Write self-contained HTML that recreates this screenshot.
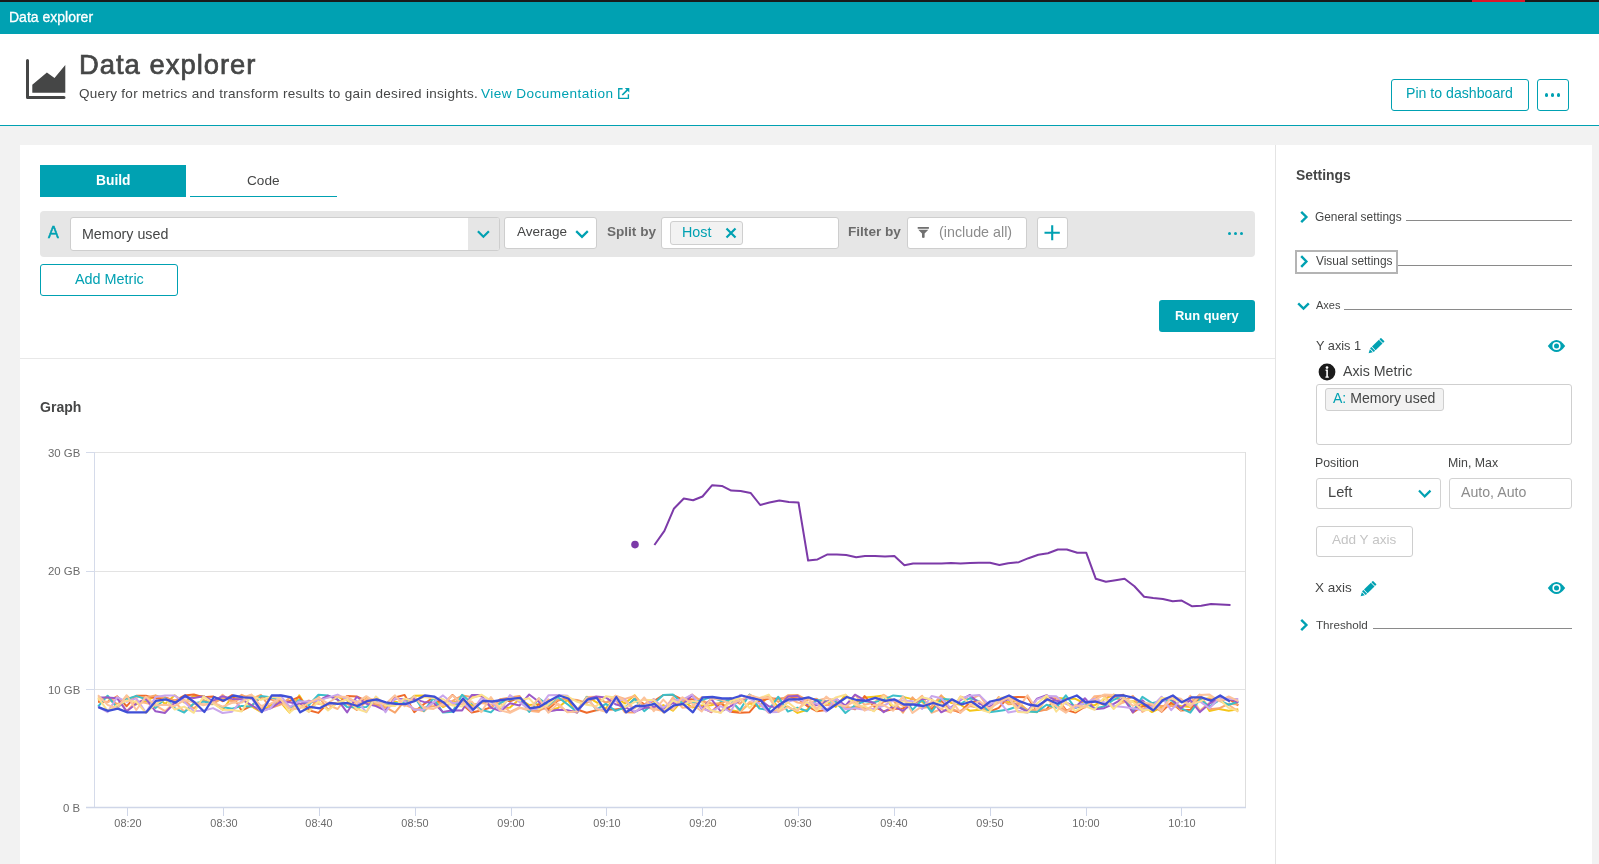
<!DOCTYPE html>
<html><head><meta charset="utf-8"><title>Data explorer</title>
<style>
html,body{margin:0;padding:0;}
body{width:1599px;height:864px;overflow:hidden;position:relative;background:#f2f2f2;font-family:"Liberation Sans",sans-serif;}
.t{position:absolute;white-space:nowrap;will-change:transform;}
.b{position:absolute;}
</style></head><body>
<div class="b" style="left:0px;top:0px;width:1599px;height:2px;background:#1a1a1a"></div>
<div class="b" style="left:1472px;top:0px;width:53px;height:2px;background:#dc172a"></div>
<div class="b" style="left:0px;top:2px;width:1599px;height:32px;background:#00a1b2"></div>
<div class="t" style="left:9.48px;top:8.55px;font-size:14.0px;line-height:17px;color:#fff;font-weight:400;-webkit-text-stroke:0.3px #fff">Data explorer</div>
<div class="b" style="left:0px;top:34px;width:1599px;height:91px;background:#fff"></div>
<div class="b" style="left:0px;top:125px;width:1599px;height:1px;background:#00a1b2"></div>
<svg class="b" style="left:0;top:0" width="120" height="120" viewBox="0 0 120 120"><path d="M26 60.5 Q26 59 27.5 59 Q29 59 29 60.5 L29 96 L64 96 Q65.5 96 65.5 97.5 Q65.5 99 64 99 L27.5 99 Q26 99 26 97.5 Z" fill="#454646"/><path d="M32.3 84.8 L46.9 72.4 L54.5 78 L65.3 64.9 L65.3 92.7 L32.3 92.7 Z" fill="#454646"/></svg>
<div class="t" style="left:78.71px;top:47.76px;font-size:27.4px;line-height:33px;color:#454646;font-weight:400;letter-spacing:1.0px;-webkit-text-stroke:0.7px #454646">Data explorer</div>
<div class="t" style="left:79.46px;top:86.07px;font-size:13.5px;line-height:16px;color:#454646;font-weight:400;letter-spacing:0.3px">Query for metrics and transform results to gain desired insights.</div>
<div class="t" style="left:481.25px;top:86.04px;font-size:13.6px;line-height:16px;color:#00a1b2;font-weight:400;letter-spacing:0.45px">View Documentation</div>
<svg class="b" style="left:617px;top:87px" width="14" height="14" viewBox="0 0 14 14"><path d="M5.6 1.75 H1.75 V11.4 H11.4 V7.3" fill="none" stroke="#00a1b2" stroke-width="1.35"/><path d="M7.8 1.1 H12.3 V5.6 Z" fill="#00a1b2"/><path d="M11.2 2.2 L5.3 8" stroke="#00a1b2" stroke-width="1.7"/></svg>
<div class="b" style="left:1391px;top:79px;width:138px;height:32px;border:1px solid #00a1b2;border-radius:3px;box-sizing:border-box;background:#fff"></div>
<div class="t" style="left:1406.12px;top:85.35px;font-size:14.14px;line-height:17px;color:#00a1b2;font-weight:400;">Pin to dashboard</div>
<div class="b" style="left:1537px;top:79px;width:32px;height:32px;border:1px solid #00a1b2;border-radius:3px;box-sizing:border-box;background:#fff"></div>
<div class="b" style="left:1544.9px;top:93.4px;width:3.2px;height:3.2px;border-radius:50%;background:#00a1b2"></div>
<div class="b" style="left:1550.9px;top:93.4px;width:3.2px;height:3.2px;border-radius:50%;background:#00a1b2"></div>
<div class="b" style="left:1556.9px;top:93.4px;width:3.2px;height:3.2px;border-radius:50%;background:#00a1b2"></div>
<div class="b" style="left:20px;top:145px;width:1572px;height:719px;background:#fff"></div>
<div class="b" style="left:1275px;top:145px;width:1px;height:719px;background:#e4e4e4"></div>
<div class="b" style="left:20px;top:358px;width:1255px;height:1px;background:#e8e8e8"></div>
<div class="b" style="left:40px;top:165px;width:146px;height:32px;background:#00a1b2"></div>
<div class="t" style="left:95.77px;top:172.12px;font-size:13.8px;line-height:17px;color:#fff;font-weight:700;">Build</div>
<div class="b" style="left:190px;top:196px;width:146.6px;height:1.4px;background:#00a1b2"></div>
<div class="t" style="left:246.92px;top:172.69px;font-size:13.6px;line-height:16px;color:#454646;font-weight:400;">Code</div>
<div class="b" style="left:40px;top:211px;width:1215px;height:46px;background:#e6e6e6;border-radius:4px"></div>
<div class="t" style="left:48.20px;top:222.89px;font-size:16.2px;line-height:19px;color:#00a1b2;font-weight:400;-webkit-text-stroke:0.5px #00a1b2">A</div>
<div class="b" style="left:70px;top:217px;width:430px;height:34px;background:#fff;border:1px solid #cecece;border-radius:3px;box-sizing:border-box"></div>
<div class="b" style="left:468px;top:218px;width:31px;height:32px;background:#e6e6e6;box-sizing:border-box;border-radius:0 2px 2px 0"></div>
<svg class="b" style="left:0;top:0;overflow:visible" width="1" height="1"><path d="M477.9 231.2 L483.4 236.8 L488.9 231.2" fill="none" stroke="#00a1b2" stroke-width="2.2"/></svg>
<div class="t" style="left:82.46px;top:225.56px;font-size:14.26px;line-height:17px;color:#454646;font-weight:400;">Memory used</div>
<div class="b" style="left:504px;top:217px;width:93px;height:32px;background:#fff;border:1px solid #cecece;border-radius:3px;box-sizing:border-box"></div>
<div class="t" style="left:517.30px;top:224.32px;font-size:13.5px;line-height:16px;color:#454646;font-weight:400;">Average</div>
<svg class="b" style="left:0;top:0;overflow:visible" width="1" height="1"><path d="M576.2 231.1 L582.0 236.9 L587.8 231.1" fill="none" stroke="#00a1b2" stroke-width="2.2"/></svg>
<div class="t" style="left:606.73px;top:224.30px;font-size:13.57px;line-height:16px;color:#6b6b6b;font-weight:700;">Split by</div>
<div class="b" style="left:661px;top:217px;width:178px;height:32px;background:#fff;border:1px solid #cecece;border-radius:3px;box-sizing:border-box"></div>
<div class="b" style="left:670px;top:221px;width:73px;height:24px;background:#f2f2f2;border:1px solid #cfcfcf;border-radius:3px;box-sizing:border-box"></div>
<div class="t" style="left:682.36px;top:223.55px;font-size:14.3px;line-height:17px;color:#00a1b2;font-weight:400;">Host</div>
<svg class="b" style="left:725px;top:227px" width="12" height="12" viewBox="0 0 12 12"><path d="M1.5 1.5 L10.5 10.5 M10.5 1.5 L1.5 10.5" stroke="#00a1b2" stroke-width="2.2"/></svg>
<div class="t" style="left:847.88px;top:224.29px;font-size:13.6px;line-height:16px;color:#6b6b6b;font-weight:700;">Filter by</div>
<div class="b" style="left:907px;top:217px;width:120px;height:32px;background:#fff;border:1px solid #cecece;border-radius:3px;box-sizing:border-box"></div>
<svg class="b" style="left:910px;top:220px" width="30" height="25" viewBox="0 0 30 25"><path d="M7.7 7 H18.9 V8.8 H7.7 Z" fill="#717171"/><path d="M8.3 9.7 H18.3 L14.6 13.4 V17.4 L13.3 18.1 L12 17.4 V13.4 Z" fill="#717171"/></svg>
<div class="t" style="left:938.54px;top:223.55px;font-size:14.3px;line-height:17px;color:#8c8c8c;font-weight:400;">(include all)</div>
<div class="b" style="left:1037px;top:217px;width:31px;height:32px;background:#fff;border:1px solid #cecece;border-radius:3px;box-sizing:border-box"></div>
<svg class="b" style="left:1043px;top:224px" width="18" height="18" viewBox="0 0 18 18"><path d="M9.2 1.3 V16.3 M1.5 8.7 H16.8" stroke="#00a1b2" stroke-width="2.1"/></svg>
<div class="b" style="left:1228.0px;top:231.5px;width:3px;height:3px;border-radius:50%;background:#00a1b2"></div>
<div class="b" style="left:1234.0px;top:231.5px;width:3px;height:3px;border-radius:50%;background:#00a1b2"></div>
<div class="b" style="left:1240.0px;top:231.5px;width:3px;height:3px;border-radius:50%;background:#00a1b2"></div>
<div class="b" style="left:40px;top:264px;width:138px;height:32px;border:1px solid #00a1b2;border-radius:3px;box-sizing:border-box;background:#fff"></div>
<div class="t" style="left:74.70px;top:270.51px;font-size:14.4px;line-height:17px;color:#00a1b2;font-weight:400;">Add Metric</div>
<div class="b" style="left:1159px;top:300px;width:96px;height:32px;background:#00a1b2;border-radius:3px"></div>
<div class="t" style="left:1174.93px;top:308.43px;font-size:12.9px;line-height:15px;color:#fff;font-weight:700;">Run query</div>
<div class="t" style="left:39.74px;top:398.83px;font-size:14.06px;line-height:17px;color:#454646;font-weight:700;">Graph</div>
<svg class="b" style="left:0;top:0" width="1599" height="864" viewBox="0 0 1599 864"><path d="M86 689.5 H1245.5" stroke="#e3e3e3" stroke-width="1"/><path d="M86 689.5 H94" stroke="#d5dbea" stroke-width="1"/><path d="M86 571.5 H1245.5" stroke="#e3e3e3" stroke-width="1"/><path d="M86 571.5 H94" stroke="#d5dbea" stroke-width="1"/><path d="M86 452.5 H1245.5" stroke="#e3e3e3" stroke-width="1"/><path d="M86 452.5 H94" stroke="#d5dbea" stroke-width="1"/><path d="M94.5 452 V807.5" stroke="#d5dbea" stroke-width="1"/><path d="M1245.5 452 V807.5" stroke="#dedede" stroke-width="1"/><path d="M86 807.5 H1246" stroke="#cfd6e8" stroke-width="1.5"/><path d="M127.5 808 V816" stroke="#cfd6e8" stroke-width="1"/><path d="M223.5 808 V816" stroke="#cfd6e8" stroke-width="1"/><path d="M319.5 808 V816" stroke="#cfd6e8" stroke-width="1"/><path d="M415.5 808 V816" stroke="#cfd6e8" stroke-width="1"/><path d="M511.5 808 V816" stroke="#cfd6e8" stroke-width="1"/><path d="M606.5 808 V816" stroke="#cfd6e8" stroke-width="1"/><path d="M702.5 808 V816" stroke="#cfd6e8" stroke-width="1"/><path d="M798.5 808 V816" stroke="#cfd6e8" stroke-width="1"/><path d="M894.5 808 V816" stroke="#cfd6e8" stroke-width="1"/><path d="M990.5 808 V816" stroke="#cfd6e8" stroke-width="1"/><path d="M1086.5 808 V816" stroke="#cfd6e8" stroke-width="1"/><path d="M1181.5 808 V816" stroke="#cfd6e8" stroke-width="1"/></svg>
<svg class="b" style="left:0;top:0" width="1599" height="864"><path d="M98.0 700.5 L107.6 697.3 L117.2 706.5 L126.7 695.8 L136.3 704.4 L145.9 701.3 L155.5 695.6 L165.1 703.9 L174.7 695.2 L184.2 702.5 L193.8 695.8 L203.4 696.2 L213.0 702.4 L222.6 709.8 L232.1 696.8 L241.7 698.6 L251.3 706.1 L260.9 712.0 L270.5 705.2 L280.1 701.8 L289.6 712.6 L299.2 695.4 L308.8 710.4 L318.4 699.9 L328.0 697.2 L337.6 696.7 L347.1 700.2 L356.7 709.6 L366.3 697.8 L375.9 705.3 L385.5 706.3 L395.0 701.4 L404.6 704.6 L414.2 695.7 L423.8 695.6 L433.4 698.3 L443.0 707.1 L452.5 702.4 L462.1 700.3 L471.7 705.3 L481.3 702.9 L490.9 700.0 L500.4 709.2 L510.0 707.4 L519.6 699.0 L529.2 705.1 L538.8 704.2 L548.4 710.7 L557.9 708.0 L567.5 699.8 L577.1 712.6 L586.7 696.7 L596.3 702.2 L605.8 708.5 L615.4 697.3 L625.0 703.5 L634.6 695.2 L644.2 706.9 L653.8 708.6 L663.3 705.1 L672.9 710.7 L682.5 700.3 L692.1 707.4 L701.7 705.5 L711.2 705.2 L720.8 702.9 L730.4 710.0 L740.0 712.0 L749.6 703.3 L759.2 706.8 L768.7 695.6 L778.3 707.5 L787.9 706.5 L797.5 712.9 L807.1 709.7 L816.7 699.8 L826.2 701.6 L835.8 706.9 L845.4 694.9 L855.0 703.0 L864.6 697.6 L874.1 696.7 L883.7 695.6 L893.3 708.7 L902.9 696.9 L912.5 699.1 L922.1 701.7 L931.6 710.6 L941.2 696.0 L950.8 702.8 L960.4 704.7 L970.0 710.8 L979.5 709.7 L989.1 710.5 L998.7 699.7 L1008.3 702.2 L1017.9 701.1 L1027.5 710.9 L1037.0 712.2 L1046.6 697.3 L1056.2 697.8 L1065.8 698.8 L1075.4 698.8 L1084.9 703.5 L1094.5 705.4 L1104.1 699.4 L1113.7 694.6 L1123.3 702.3 L1132.9 701.3 L1142.4 705.0 L1152.0 712.1 L1161.6 707.3 L1171.2 704.0 L1180.8 705.9 L1190.3 707.0 L1199.9 695.5 L1209.5 711.1 L1219.1 708.9 L1228.7 710.7 L1238.3 709.3" fill="none" stroke="#f5c518" stroke-width="2.0" stroke-linejoin="round"/></svg>
<svg class="b" style="left:0;top:0" width="1599" height="864"><path d="M98.0 701.8 L107.6 701.9 L117.2 696.4 L126.7 706.2 L136.3 695.7 L145.9 695.7 L155.5 698.4 L165.1 697.5 L174.7 700.8 L184.2 695.5 L193.8 694.5 L203.4 697.3 L213.0 696.4 L222.6 701.2 L232.1 695.0 L241.7 710.7 L251.3 705.9 L260.9 697.2 L270.5 699.2 L280.1 700.9 L289.6 701.2 L299.2 696.8 L308.8 710.2 L318.4 712.9 L328.0 703.1 L337.6 703.5 L347.1 696.1 L356.7 696.4 L366.3 700.8 L375.9 699.4 L385.5 709.8 L395.0 697.5 L404.6 694.9 L414.2 712.1 L423.8 704.3 L433.4 697.2 L443.0 704.5 L452.5 695.0 L462.1 704.3 L471.7 712.6 L481.3 710.5 L490.9 707.4 L500.4 699.3 L510.0 701.3 L519.6 697.6 L529.2 708.8 L538.8 704.4 L548.4 708.9 L557.9 700.6 L567.5 698.6 L577.1 709.5 L586.7 712.7 L596.3 710.3 L605.8 709.4 L615.4 709.6 L625.0 708.2 L634.6 698.7 L644.2 704.1 L653.8 701.1 L663.3 695.0 L672.9 695.0 L682.5 699.7 L692.1 699.3 L701.7 707.3 L711.2 712.2 L720.8 702.8 L730.4 711.8 L740.0 712.8 L749.6 712.2 L759.2 701.2 L768.7 698.6 L778.3 698.7 L787.9 698.1 L797.5 698.3 L807.1 706.0 L816.7 711.2 L826.2 710.0 L835.8 703.4 L845.4 706.6 L855.0 709.3 L864.6 696.1 L874.1 706.7 L883.7 711.3 L893.3 709.0 L902.9 708.4 L912.5 703.3 L922.1 697.8 L931.6 709.1 L941.2 700.7 L950.8 709.3 L960.4 712.5 L970.0 701.8 L979.5 701.9 L989.1 712.0 L998.7 707.9 L1008.3 697.6 L1017.9 696.9 L1027.5 697.3 L1037.0 711.2 L1046.6 709.4 L1056.2 697.2 L1065.8 709.8 L1075.4 712.6 L1084.9 706.7 L1094.5 701.0 L1104.1 704.7 L1113.7 696.9 L1123.3 694.8 L1132.9 712.5 L1142.4 706.5 L1152.0 704.2 L1161.6 711.8 L1171.2 702.5 L1180.8 710.6 L1190.3 709.8 L1199.9 698.4 L1209.5 699.2 L1219.1 699.9 L1228.7 698.9 L1238.3 705.3" fill="none" stroke="#ef6a2a" stroke-width="2.0" stroke-linejoin="round"/></svg>
<svg class="b" style="left:0;top:0" width="1599" height="864"><path d="M98.0 699.3 L107.6 702.3 L117.2 696.9 L126.7 711.3 L136.3 701.0 L145.9 703.0 L155.5 705.3 L165.1 711.2 L174.7 702.3 L184.2 711.5 L193.8 703.8 L203.4 704.3 L213.0 704.2 L222.6 694.8 L232.1 702.6 L241.7 697.9 L251.3 694.6 L260.9 709.3 L270.5 697.7 L280.1 703.3 L289.6 707.9 L299.2 704.8 L308.8 700.5 L318.4 704.1 L328.0 704.8 L337.6 709.0 L347.1 696.5 L356.7 704.9 L366.3 699.1 L375.9 699.6 L385.5 708.8 L395.0 703.9 L404.6 704.9 L414.2 708.6 L423.8 711.4 L433.4 702.7 L443.0 705.8 L452.5 703.9 L462.1 704.0 L471.7 707.3 L481.3 702.9 L490.9 704.4 L500.4 703.3 L510.0 711.9 L519.6 707.4 L529.2 710.7 L538.8 711.9 L548.4 699.3 L557.9 704.9 L567.5 712.0 L577.1 710.0 L586.7 697.0 L596.3 696.8 L605.8 702.7 L615.4 695.8 L625.0 699.0 L634.6 695.9 L644.2 706.9 L653.8 709.0 L663.3 711.1 L672.9 697.4 L682.5 707.7 L692.1 706.7 L701.7 697.1 L711.2 710.8 L720.8 712.4 L730.4 698.6 L740.0 712.1 L749.6 701.9 L759.2 703.5 L768.7 712.8 L778.3 709.9 L787.9 697.5 L797.5 702.5 L807.1 704.0 L816.7 700.8 L826.2 698.1 L835.8 700.4 L845.4 707.9 L855.0 694.9 L864.6 704.7 L874.1 702.6 L883.7 694.8 L893.3 700.6 L902.9 706.0 L912.5 704.0 L922.1 695.7 L931.6 712.7 L941.2 709.1 L950.8 712.5 L960.4 696.4 L970.0 699.4 L979.5 695.2 L989.1 708.9 L998.7 699.5 L1008.3 696.9 L1017.9 702.3 L1027.5 711.4 L1037.0 709.7 L1046.6 699.3 L1056.2 697.3 L1065.8 711.5 L1075.4 705.1 L1084.9 707.5 L1094.5 696.2 L1104.1 695.6 L1113.7 707.2 L1123.3 702.4 L1132.9 695.8 L1142.4 711.9 L1152.0 706.2 L1161.6 709.3 L1171.2 696.0 L1180.8 710.3 L1190.3 695.7 L1199.9 710.5 L1209.5 702.9 L1219.1 700.8 L1228.7 704.7 L1238.3 711.6" fill="none" stroke="#ffb787" stroke-width="2.0" stroke-linejoin="round"/></svg>
<svg class="b" style="left:0;top:0" width="1599" height="864"><path d="M98.0 699.5 L107.6 696.9 L117.2 704.2 L126.7 698.9 L136.3 696.5 L145.9 697.5 L155.5 695.4 L165.1 698.2 L174.7 700.3 L184.2 700.1 L193.8 708.6 L203.4 699.9 L213.0 703.8 L222.6 697.8 L232.1 700.9 L241.7 694.8 L251.3 699.1 L260.9 694.8 L270.5 708.1 L280.1 704.7 L289.6 698.0 L299.2 703.3 L308.8 711.8 L318.4 696.5 L328.0 709.7 L337.6 702.5 L347.1 703.7 L356.7 709.9 L366.3 701.8 L375.9 703.9 L385.5 707.2 L395.0 712.7 L404.6 700.8 L414.2 709.9 L423.8 707.6 L433.4 706.3 L443.0 702.0 L452.5 700.9 L462.1 695.5 L471.7 696.9 L481.3 695.8 L490.9 708.2 L500.4 699.2 L510.0 697.5 L519.6 696.1 L529.2 710.1 L538.8 710.6 L548.4 706.9 L557.9 699.7 L567.5 699.0 L577.1 699.9 L586.7 703.0 L596.3 697.4 L605.8 702.7 L615.4 699.4 L625.0 712.3 L634.6 712.5 L644.2 704.6 L653.8 699.0 L663.3 712.4 L672.9 700.2 L682.5 701.1 L692.1 694.5 L701.7 701.6 L711.2 703.3 L720.8 703.8 L730.4 698.2 L740.0 703.8 L749.6 694.6 L759.2 699.4 L768.7 696.2 L778.3 701.9 L787.9 695.3 L797.5 694.9 L807.1 700.1 L816.7 698.8 L826.2 705.3 L835.8 704.3 L845.4 708.4 L855.0 706.7 L864.6 707.7 L874.1 710.8 L883.7 701.7 L893.3 700.5 L902.9 712.7 L912.5 697.3 L922.1 707.9 L931.6 706.4 L941.2 695.3 L950.8 710.0 L960.4 711.0 L970.0 706.1 L979.5 708.1 L989.1 709.5 L998.7 697.1 L1008.3 704.2 L1017.9 703.8 L1027.5 709.9 L1037.0 709.4 L1046.6 709.8 L1056.2 705.3 L1065.8 711.0 L1075.4 707.1 L1084.9 707.3 L1094.5 698.8 L1104.1 695.1 L1113.7 697.0 L1123.3 701.2 L1132.9 696.4 L1142.4 710.0 L1152.0 704.8 L1161.6 706.1 L1171.2 706.1 L1180.8 707.1 L1190.3 703.6 L1199.9 694.6 L1209.5 709.3 L1219.1 708.3 L1228.7 703.8 L1238.3 704.4" fill="none" stroke="#f8a56b" stroke-width="2.0" stroke-linejoin="round"/></svg>
<svg class="b" style="left:0;top:0" width="1599" height="864"><path d="M98.0 706.7 L107.6 695.7 L117.2 708.1 L126.7 699.2 L136.3 695.9 L145.9 699.4 L155.5 708.0 L165.1 698.3 L174.7 708.2 L184.2 712.6 L193.8 703.6 L203.4 701.6 L213.0 703.4 L222.6 707.1 L232.1 708.7 L241.7 705.9 L251.3 706.4 L260.9 695.9 L270.5 697.2 L280.1 699.2 L289.6 708.2 L299.2 700.1 L308.8 705.0 L318.4 694.7 L328.0 695.6 L337.6 699.5 L347.1 706.9 L356.7 707.3 L366.3 707.0 L375.9 699.9 L385.5 704.1 L395.0 703.1 L404.6 703.1 L414.2 696.7 L423.8 711.0 L433.4 698.2 L443.0 712.6 L452.5 711.8 L462.1 694.8 L471.7 703.0 L481.3 709.7 L490.9 712.4 L500.4 702.8 L510.0 699.5 L519.6 698.4 L529.2 712.0 L538.8 698.4 L548.4 705.3 L557.9 697.1 L567.5 704.2 L577.1 712.1 L586.7 697.0 L596.3 709.7 L605.8 703.9 L615.4 710.9 L625.0 707.5 L634.6 698.8 L644.2 711.1 L653.8 703.5 L663.3 695.0 L672.9 694.6 L682.5 703.6 L692.1 702.8 L701.7 700.1 L711.2 697.1 L720.8 700.9 L730.4 700.3 L740.0 710.0 L749.6 694.5 L759.2 708.4 L768.7 710.0 L778.3 696.7 L787.9 711.6 L797.5 707.7 L807.1 711.2 L816.7 699.9 L826.2 701.4 L835.8 701.8 L845.4 713.0 L855.0 705.4 L864.6 701.2 L874.1 702.4 L883.7 699.6 L893.3 695.4 L902.9 696.4 L912.5 709.9 L922.1 699.8 L931.6 711.8 L941.2 699.1 L950.8 699.4 L960.4 704.0 L970.0 698.0 L979.5 701.4 L989.1 712.2 L998.7 710.9 L1008.3 709.5 L1017.9 706.2 L1027.5 711.4 L1037.0 711.9 L1046.6 704.7 L1056.2 707.8 L1065.8 695.4 L1075.4 708.0 L1084.9 702.8 L1094.5 708.4 L1104.1 706.4 L1113.7 699.8 L1123.3 695.4 L1132.9 711.6 L1142.4 696.9 L1152.0 703.2 L1161.6 700.9 L1171.2 700.0 L1180.8 708.2 L1190.3 712.6 L1199.9 699.3 L1209.5 706.6 L1219.1 700.1 L1228.7 704.8 L1238.3 701.8" fill="none" stroke="#3cbfc9" stroke-width="2.0" stroke-linejoin="round"/></svg>
<svg class="b" style="left:0;top:0" width="1599" height="864"><path d="M98.0 697.6 L107.6 697.5 L117.2 698.3 L126.7 711.3 L136.3 703.7 L145.9 698.6 L155.5 711.3 L165.1 712.9 L174.7 702.8 L184.2 697.1 L193.8 698.1 L203.4 696.2 L213.0 700.8 L222.6 696.2 L232.1 698.9 L241.7 699.3 L251.3 705.0 L260.9 710.9 L270.5 708.4 L280.1 702.1 L289.6 702.2 L299.2 704.2 L308.8 701.5 L318.4 700.8 L328.0 695.6 L337.6 699.6 L347.1 712.4 L356.7 696.8 L366.3 703.8 L375.9 706.1 L385.5 710.5 L395.0 698.5 L404.6 699.5 L414.2 699.1 L423.8 701.9 L433.4 702.7 L443.0 712.1 L452.5 710.2 L462.1 710.6 L471.7 694.9 L481.3 695.1 L490.9 707.6 L500.4 711.1 L510.0 703.3 L519.6 705.4 L529.2 694.5 L538.8 701.7 L548.4 711.6 L557.9 709.8 L567.5 710.3 L577.1 712.5 L586.7 699.1 L596.3 696.5 L605.8 697.4 L615.4 704.2 L625.0 707.1 L634.6 711.9 L644.2 707.9 L653.8 706.5 L663.3 708.6 L672.9 703.0 L682.5 704.7 L692.1 695.2 L701.7 709.0 L711.2 698.8 L720.8 711.5 L730.4 706.4 L740.0 700.1 L749.6 696.9 L759.2 699.2 L768.7 706.3 L778.3 707.4 L787.9 696.6 L797.5 695.8 L807.1 704.2 L816.7 705.3 L826.2 701.7 L835.8 698.6 L845.4 705.6 L855.0 694.7 L864.6 700.1 L874.1 703.0 L883.7 712.2 L893.3 706.4 L902.9 710.8 L912.5 703.3 L922.1 698.8 L931.6 699.1 L941.2 712.3 L950.8 707.5 L960.4 700.2 L970.0 694.9 L979.5 703.7 L989.1 707.0 L998.7 702.3 L1008.3 699.3 L1017.9 706.8 L1027.5 711.6 L1037.0 698.7 L1046.6 695.1 L1056.2 700.8 L1065.8 702.3 L1075.4 707.1 L1084.9 698.2 L1094.5 709.2 L1104.1 708.2 L1113.7 703.8 L1123.3 698.3 L1132.9 712.4 L1142.4 700.3 L1152.0 709.7 L1161.6 698.8 L1171.2 698.6 L1180.8 708.6 L1190.3 700.0 L1199.9 712.1 L1209.5 703.7 L1219.1 698.0 L1228.7 698.6 L1238.3 702.2" fill="none" stroke="#9b59c8" stroke-width="2.0" stroke-linejoin="round"/></svg>
<svg class="b" style="left:0;top:0" width="1599" height="864"><path d="M98.0 706.8 L107.6 712.1 L117.2 697.2 L126.7 701.8 L136.3 698.4 L145.9 712.5 L155.5 697.1 L165.1 695.5 L174.7 695.6 L184.2 701.8 L193.8 711.1 L203.4 710.8 L213.0 708.1 L222.6 713.0 L232.1 711.7 L241.7 700.6 L251.3 697.9 L260.9 711.8 L270.5 708.3 L280.1 695.1 L289.6 706.8 L299.2 701.5 L308.8 701.4 L318.4 700.6 L328.0 697.6 L337.6 694.6 L347.1 699.7 L356.7 701.0 L366.3 712.2 L375.9 696.8 L385.5 712.3 L395.0 698.3 L404.6 701.1 L414.2 709.7 L423.8 709.7 L433.4 702.5 L443.0 695.4 L452.5 703.3 L462.1 701.4 L471.7 711.5 L481.3 698.1 L490.9 701.2 L500.4 711.1 L510.0 695.1 L519.6 702.1 L529.2 709.5 L538.8 708.7 L548.4 695.3 L557.9 695.1 L567.5 695.7 L577.1 711.5 L586.7 699.3 L596.3 708.3 L605.8 711.1 L615.4 700.8 L625.0 699.5 L634.6 712.2 L644.2 705.9 L653.8 699.4 L663.3 707.8 L672.9 700.4 L682.5 699.6 L692.1 694.6 L701.7 708.5 L711.2 711.5 L720.8 706.2 L730.4 712.0 L740.0 694.9 L749.6 698.8 L759.2 703.3 L768.7 712.2 L778.3 712.1 L787.9 701.7 L797.5 699.1 L807.1 702.5 L816.7 703.6 L826.2 711.7 L835.8 697.9 L845.4 709.3 L855.0 708.2 L864.6 709.7 L874.1 708.8 L883.7 705.7 L893.3 700.6 L902.9 700.4 L912.5 701.2 L922.1 709.0 L931.6 696.0 L941.2 698.2 L950.8 708.4 L960.4 699.1 L970.0 695.7 L979.5 695.1 L989.1 704.7 L998.7 700.5 L1008.3 712.6 L1017.9 710.8 L1027.5 712.8 L1037.0 699.4 L1046.6 696.1 L1056.2 696.3 L1065.8 703.7 L1075.4 707.6 L1084.9 702.8 L1094.5 698.8 L1104.1 702.2 L1113.7 706.0 L1123.3 707.0 L1132.9 708.3 L1142.4 710.2 L1152.0 706.8 L1161.6 696.7 L1171.2 710.1 L1180.8 699.9 L1190.3 705.0 L1199.9 701.4 L1209.5 708.2 L1219.1 698.2 L1228.7 699.1 L1238.3 699.0" fill="none" stroke="#c9a6ec" stroke-width="2.0" stroke-linejoin="round"/></svg>
<svg class="b" style="left:0;top:0" width="1599" height="864"><path d="M98.0 697.3 L107.6 710.9 L117.2 705.2 L126.7 700.5 L136.3 701.8 L145.9 712.9 L155.5 703.9 L165.1 698.8 L174.7 709.5 L184.2 706.6 L193.8 712.8 L203.4 696.4 L213.0 703.3 L222.6 709.7 L232.1 710.1 L241.7 711.4 L251.3 695.2 L260.9 699.9 L270.5 696.7 L280.1 698.0 L289.6 712.5 L299.2 705.3 L308.8 711.7 L318.4 701.4 L328.0 710.5 L337.6 702.8 L347.1 699.3 L356.7 708.9 L366.3 712.0 L375.9 696.5 L385.5 705.5 L395.0 706.0 L404.6 698.5 L414.2 701.3 L423.8 697.1 L433.4 698.3 L443.0 699.2 L452.5 705.6 L462.1 706.6 L471.7 698.3 L481.3 694.7 L490.9 700.6 L500.4 707.0 L510.0 697.9 L519.6 700.3 L529.2 698.3 L538.8 709.2 L548.4 704.6 L557.9 695.7 L567.5 696.4 L577.1 701.8 L586.7 704.7 L596.3 706.3 L605.8 696.2 L615.4 697.5 L625.0 707.4 L634.6 702.1 L644.2 699.7 L653.8 700.2 L663.3 712.1 L672.9 700.3 L682.5 705.0 L692.1 701.1 L701.7 702.2 L711.2 710.5 L720.8 712.9 L730.4 701.2 L740.0 698.1 L749.6 708.0 L759.2 698.3 L768.7 694.6 L778.3 711.2 L787.9 702.3 L797.5 709.7 L807.1 702.0 L816.7 710.8 L826.2 703.0 L835.8 697.5 L845.4 694.8 L855.0 704.7 L864.6 706.4 L874.1 711.3 L883.7 696.1 L893.3 706.0 L902.9 701.4 L912.5 703.8 L922.1 697.2 L931.6 699.7 L941.2 704.1 L950.8 711.6 L960.4 696.5 L970.0 703.6 L979.5 709.4 L989.1 712.4 L998.7 698.2 L1008.3 696.8 L1017.9 711.9 L1027.5 712.5 L1037.0 703.4 L1046.6 695.5 L1056.2 711.6 L1065.8 701.7 L1075.4 711.2 L1084.9 706.0 L1094.5 709.8 L1104.1 697.5 L1113.7 709.0 L1123.3 698.6 L1132.9 702.0 L1142.4 710.2 L1152.0 709.8 L1161.6 697.9 L1171.2 698.5 L1180.8 701.9 L1190.3 704.1 L1199.9 701.6 L1209.5 696.8 L1219.1 699.1 L1228.7 707.9 L1238.3 711.1" fill="none" stroke="#fbe08f" stroke-width="2.0" stroke-linejoin="round"/></svg>
<svg class="b" style="left:0;top:0" width="1599" height="864"><path d="M98.0 695.3 L107.6 704.9 L117.2 708.5 L126.7 695.2 L136.3 710.0 L145.9 696.7 L155.5 705.6 L165.1 704.7 L174.7 706.1 L184.2 700.2 L193.8 702.3 L203.4 705.3 L213.0 702.4 L222.6 706.7 L232.1 702.8 L241.7 702.6 L251.3 694.9 L260.9 705.9 L270.5 703.6 L280.1 698.9 L289.6 708.6 L299.2 708.9 L308.8 703.0 L318.4 697.8 L328.0 703.3 L337.6 696.5 L347.1 696.9 L356.7 702.5 L366.3 696.2 L375.9 702.7 L385.5 703.9 L395.0 695.3 L404.6 706.3 L414.2 696.0 L423.8 708.1 L433.4 708.9 L443.0 704.0 L452.5 695.5 L462.1 703.8 L471.7 701.5 L481.3 712.1 L490.9 697.0 L500.4 710.4 L510.0 712.9 L519.6 708.0 L529.2 709.6 L538.8 698.1 L548.4 712.7 L557.9 703.6 L567.5 712.2 L577.1 711.4 L586.7 697.6 L596.3 709.1 L605.8 711.7 L615.4 695.7 L625.0 701.0 L634.6 708.5 L644.2 697.4 L653.8 711.1 L663.3 699.6 L672.9 709.6 L682.5 697.2 L692.1 703.8 L701.7 711.5 L711.2 698.4 L720.8 699.4 L730.4 703.9 L740.0 700.4 L749.6 695.2 L759.2 697.9 L768.7 697.5 L778.3 711.8 L787.9 707.1 L797.5 711.1 L807.1 697.6 L816.7 709.0 L826.2 696.6 L835.8 704.3 L845.4 706.3 L855.0 701.2 L864.6 710.6 L874.1 704.8 L883.7 705.2 L893.3 710.8 L902.9 696.4 L912.5 712.9 L922.1 706.2 L931.6 701.8 L941.2 709.3 L950.8 699.4 L960.4 712.8 L970.0 705.2 L979.5 701.2 L989.1 708.6 L998.7 702.7 L1008.3 697.8 L1017.9 708.3 L1027.5 695.4 L1037.0 709.7 L1046.6 699.2 L1056.2 706.3 L1065.8 712.7 L1075.4 705.3 L1084.9 706.8 L1094.5 700.3 L1104.1 694.5 L1113.7 695.1 L1123.3 697.3 L1132.9 705.9 L1142.4 702.5 L1152.0 704.0 L1161.6 711.1 L1171.2 696.9 L1180.8 698.7 L1190.3 706.6 L1199.9 694.9 L1209.5 694.5 L1219.1 701.1 L1228.7 696.5 L1238.3 701.1" fill="none" stroke="#fcc39c" stroke-width="2.0" stroke-linejoin="round"/></svg>
<svg class="b" style="left:0;top:0" width="1599" height="864"><path d="M98.3 707.2 L108.0 710.8 L117.8 708.7 L127.5 712.3 L136.5 712.3 L146.3 712.3 L156.0 700.8 L165.8 699.3 L175.6 702.7 L185.3 695.5 L195.1 702.7 L204.4 712.0 L213.9 697.0 L223.6 700.8 L233.4 695.5 L243.2 697.3 L252.2 697.8 L261.9 712.0 L271.7 695.5 L281.4 695.5 L291.2 697.3 L300.2 712.3 L310.0 706.8 L319.7 708.3 L329.5 703.0 L337.8 703.8 L347.5 703.0 L357.3 706.0 L367.0 701.2 L376.8 699.3 L385.8 702.3 L395.6 703.8 L405.3 704.2 L415.1 700.8 L424.8 695.5 L434.6 696.7 L444.4 703.0 L453.4 712.0 L463.1 698.5 L472.9 709.8 L482.7 700.8 L492.4 701.5 L502.2 700.0 L511.2 698.8 L520.2 697.8 L530.0 708.3 L539.7 706.8 L549.5 700.8 L559.2 695.5 L568.3 698.5 L578.0 709.8 L587.8 699.3 L596.8 697.8 L606.5 712.3 L616.3 697.0 L626.1 712.3 L635.8 706.0 L644.8 706.0 L654.6 703.8 L664.4 712.3 L674.1 705.3 L683.1 703.8 L692.9 712.3 L702.6 697.3 L712.4 697.0 L722.2 698.5 L731.9 698.5 L741.7 695.5 L750.7 697.8 L760.5 700.0 L770.2 712.3 L779.2 704.5 L789.0 699.3 L798.7 699.3 L808.5 697.3 L817.5 700.8 L827.3 710.5 L837.0 703.8 L846.8 697.0 L856.6 700.0 L865.6 700.8 L875.3 697.8 L885.1 700.8 L894.1 699.3 L903.9 704.5 L913.6 704.5 L923.4 706.0 L933.1 703.0 L942.9 706.0 L951.9 699.3 L961.7 704.5 L971.4 701.5 L981.2 708.3 L990.2 701.5 L1000.0 699.3 L1009.0 695.5 L1018.7 700.8 L1028.5 704.5 L1037.8 706.0 L1047.5 699.3 L1057.3 703.8 L1067.0 699.3 L1076.8 695.5 L1085.8 702.3 L1095.6 701.5 L1105.3 704.5 L1115.1 695.5 L1124.1 695.5 L1133.9 697.8 L1143.6 703.8 L1153.4 710.5 L1163.1 700.0 L1172.9 695.5 L1181.9 702.3 L1191.7 697.3 L1201.4 697.3 L1211.2 700.8 L1220.2 695.5 L1230.0 701.5" fill="none" stroke="#3f4fd6" stroke-width="2.3" stroke-linejoin="round"/></svg>
<svg class="b" style="left:0;top:0" width="1599" height="864"><path d="M654.4 545.0 L664.4 530.9 L673.8 508.8 L683.8 498.5 L693.1 500.2 L702.5 496.5 L712.2 485.2 L721.9 485.9 L731.2 490.6 L740.6 491.0 L750.6 492.9 L760.2 505.0 L769.4 502.5 L779.4 500.4 L788.8 501.9 L798.5 502.5 L808.1 560.5 L817.5 559.4 L827.5 554.4 L836.9 554.4 L846.2 555.0 L856.2 557.2 L865.0 556.0 L875.0 556.0 L885.0 556.5 L894.4 556.0 L904.4 565.2 L913.1 563.5 L922.5 563.5 L932.0 563.5 L941.5 563.5 L951.2 563.1 L960.5 563.5 L970.0 563.1 L978.8 562.8 L990.0 562.8 L999.4 565.0 L1008.2 563.3 L1018.8 562.2 L1028.5 558.2 L1038.3 554.8 L1048.0 553.2 L1057.8 549.5 L1066.8 549.5 L1077.3 552.8 L1086.3 552.8 L1095.8 578.8 L1105.9 581.8 L1115.6 580.3 L1124.6 578.8 L1134.4 586.3 L1144.1 596.8 L1153.2 598.0 L1162.9 599.0 L1172.7 601.3 L1181.7 600.6 L1192.2 606.3 L1201.2 605.8 L1211.0 604.0 L1220.7 604.6 L1230.5 605.0" fill="none" stroke="#7c3aa8" stroke-width="2" stroke-linejoin="round"/><circle cx="635" cy="544.6" r="3.8" fill="#7c3aa8"/></svg>
<div class="t" style="right:1518.7px;top:445.95px;font-size:11.4px;line-height:14px;color:#6b6b6b">30 GB</div>
<div class="t" style="right:1518.7px;top:564.28px;font-size:11.4px;line-height:14px;color:#6b6b6b">20 GB</div>
<div class="t" style="right:1518.7px;top:682.62px;font-size:11.4px;line-height:14px;color:#6b6b6b">10 GB</div>
<div class="t" style="right:1518.7px;top:800.95px;font-size:11.4px;line-height:14px;color:#6b6b6b">0 B</div>
<div class="t" style="left:107.7px;width:40px;text-align:center;top:816.42px;font-size:10.9px;line-height:14px;color:#6b6b6b">08:20</div>
<div class="t" style="left:203.5px;width:40px;text-align:center;top:816.42px;font-size:10.9px;line-height:14px;color:#6b6b6b">08:30</div>
<div class="t" style="left:299.3px;width:40px;text-align:center;top:816.42px;font-size:10.9px;line-height:14px;color:#6b6b6b">08:40</div>
<div class="t" style="left:395.2px;width:40px;text-align:center;top:816.42px;font-size:10.9px;line-height:14px;color:#6b6b6b">08:50</div>
<div class="t" style="left:491.0px;width:40px;text-align:center;top:816.42px;font-size:10.9px;line-height:14px;color:#6b6b6b">09:00</div>
<div class="t" style="left:586.8px;width:40px;text-align:center;top:816.42px;font-size:10.9px;line-height:14px;color:#6b6b6b">09:10</div>
<div class="t" style="left:682.6px;width:40px;text-align:center;top:816.42px;font-size:10.9px;line-height:14px;color:#6b6b6b">09:20</div>
<div class="t" style="left:778.4px;width:40px;text-align:center;top:816.42px;font-size:10.9px;line-height:14px;color:#6b6b6b">09:30</div>
<div class="t" style="left:874.3px;width:40px;text-align:center;top:816.42px;font-size:10.9px;line-height:14px;color:#6b6b6b">09:40</div>
<div class="t" style="left:970.1px;width:40px;text-align:center;top:816.42px;font-size:10.9px;line-height:14px;color:#6b6b6b">09:50</div>
<div class="t" style="left:1065.9px;width:40px;text-align:center;top:816.42px;font-size:10.9px;line-height:14px;color:#6b6b6b">10:00</div>
<div class="t" style="left:1161.7px;width:40px;text-align:center;top:816.42px;font-size:10.9px;line-height:14px;color:#6b6b6b">10:10</div>
<div class="t" style="left:1296.22px;top:166.68px;font-size:13.9px;line-height:17px;color:#454646;font-weight:700;">Settings</div>
<svg class="b" style="left:0;top:0;overflow:visible" width="1" height="1"><path d="M1301.2 211.8 L1306.4 217.0 L1301.2 222.2" fill="none" stroke="#00a1b2" stroke-width="2.4"/></svg>
<div class="t" style="left:1315.40px;top:209.98px;font-size:11.9px;line-height:14px;color:#454646;font-weight:400;">General settings</div>
<div class="b" style="left:1405.7px;top:220px;width:166.29999999999995px;height:1px;background:#8a8a8a"></div>
<div class="b" style="left:1295px;top:250px;width:103px;height:24px;border:2px solid #b4b4b4;box-sizing:border-box"></div>
<svg class="b" style="left:0;top:0;overflow:visible" width="1" height="1"><path d="M1301.2 256.2 L1306.4 261.5 L1301.2 266.8" fill="none" stroke="#00a1b2" stroke-width="2.4"/></svg>
<div class="t" style="left:1316.00px;top:254.48px;font-size:11.9px;line-height:14px;color:#454646;font-weight:400;">Visual settings</div>
<div class="b" style="left:1398px;top:265px;width:174px;height:1px;background:#8a8a8a"></div>
<svg class="b" style="left:0;top:0;overflow:visible" width="1" height="1"><path d="M1298.2 303.4 L1303.5 308.6 L1308.8 303.4" fill="none" stroke="#00a1b2" stroke-width="2.4"/></svg>
<div class="t" style="left:1316.00px;top:299.29px;font-size:11.0px;line-height:13px;color:#454646;font-weight:400;">Axes</div>
<div class="b" style="left:1344px;top:309px;width:228px;height:1px;background:#8a8a8a"></div>
<div class="t" style="left:1315.84px;top:338.18px;font-size:12.75px;line-height:15px;color:#454646;font-weight:400;">Y axis 1</div>
<svg class="b" style="left:0;top:0;overflow:visible" width="1" height="1"><g transform="translate(1368.6 353.3) rotate(-44)" fill="#00a1b2"><path d="M0 0 L3.8 -2.1 L3.8 2.1 Z"/><rect x="4.5" y="-2.6" width="2" height="5.2"/><rect x="7.2" y="-2.6" width="9.6" height="5.2"/><rect x="17.5" y="-2.6" width="2.2" height="5.2" rx="0.6"/></g></svg>
<svg class="b" style="left:1547.0px;top:338.6px" width="19" height="14" viewBox="0 0 19 14"><path d="M0.8 7 Q9.5 -5 18.2 7 Q9.5 19 0.8 7 Z" fill="#00a1b2"/><circle cx="9.5" cy="7" r="4.1" fill="#fff"/><circle cx="9.5" cy="7" r="2.5" fill="#00a1b2"/></svg>
<svg class="b" style="left:1317.5px;top:363.3px" width="18" height="18" viewBox="0 0 18 18"><circle cx="9" cy="9" r="8.4" fill="#1b1b1b"/><circle cx="9" cy="4.6" r="1.35" fill="#fff"/><path d="M7.6 6.6 H9.9 V13.4 H10.8 V14.8 H7.4 V13.4 H8.3 V8 H7.6 Z" fill="#fff"/></svg>
<div class="t" style="left:1342.50px;top:363.08px;font-size:14.2px;line-height:17px;color:#454646;font-weight:400;">Axis Metric</div>
<div class="b" style="left:1316px;top:383.5px;width:256px;height:61.5px;border:1px solid #cfcfcf;border-radius:3px;box-sizing:border-box;background:#fff"></div>
<div class="b" style="left:1325px;top:387.5px;width:119px;height:23.5px;background:#f2f2f2;border:1px solid #cfcfcf;border-radius:3px;box-sizing:border-box"></div>
<div class="t" style="left:1333px;top:389.53px;font-size:14.05px;line-height:17px;color:#454646"><span style="color:#00a1b2">A:</span> Memory used</div>
<div class="t" style="left:1315.42px;top:456.14px;font-size:12.3px;line-height:15px;color:#454646;font-weight:400;">Position</div>
<div class="t" style="left:1447.61px;top:456.12px;font-size:12.35px;line-height:15px;color:#454646;font-weight:400;">Min, Max</div>
<div class="b" style="left:1316px;top:478px;width:124.5px;height:30.5px;border:1px solid #d2d2d2;border-radius:3px;box-sizing:border-box;background:#fff"></div>
<div class="t" style="left:1327.83px;top:483.22px;font-size:14.65px;line-height:18px;color:#454646;font-weight:400;">Left</div>
<svg class="b" style="left:0;top:0;overflow:visible" width="1" height="1"><path d="M1419.0 490.6 L1424.7 496.4 L1430.5 490.6" fill="none" stroke="#00a1b2" stroke-width="2.2"/></svg>
<div class="b" style="left:1448.5px;top:478px;width:123.5px;height:30.5px;border:1px solid #d2d2d2;border-radius:3px;box-sizing:border-box;background:#fff"></div>
<div class="t" style="left:1460.90px;top:483.89px;font-size:14.16px;line-height:17px;color:#8c8c8c;font-weight:400;">Auto, Auto</div>
<div class="b" style="left:1316px;top:525.5px;width:96.5px;height:31px;border:1px solid #cecece;border-radius:3px;box-sizing:border-box;background:#fff"></div>
<div class="t" style="left:1331.60px;top:532.30px;font-size:13.56px;line-height:16px;color:#c4c4c4;font-weight:400;">Add Y axis</div>
<div class="t" style="left:1315.43px;top:579.82px;font-size:13.5px;line-height:16px;color:#454646;font-weight:400;">X axis</div>
<svg class="b" style="left:0;top:0;overflow:visible" width="1" height="1"><g transform="translate(1360.6 596.3) rotate(-44)" fill="#00a1b2"><path d="M0 0 L3.8 -2.1 L3.8 2.1 Z"/><rect x="4.5" y="-2.6" width="2" height="5.2"/><rect x="7.2" y="-2.6" width="9.6" height="5.2"/><rect x="17.5" y="-2.6" width="2.2" height="5.2" rx="0.6"/></g></svg>
<svg class="b" style="left:1547.0px;top:581.3px" width="19" height="14" viewBox="0 0 19 14"><path d="M0.8 7 Q9.5 -5 18.2 7 Q9.5 19 0.8 7 Z" fill="#00a1b2"/><circle cx="9.5" cy="7" r="4.1" fill="#fff"/><circle cx="9.5" cy="7" r="2.5" fill="#00a1b2"/></svg>
<svg class="b" style="left:0;top:0;overflow:visible" width="1" height="1"><path d="M1301.2 619.8 L1306.4 625.0 L1301.2 630.2" fill="none" stroke="#00a1b2" stroke-width="2.4"/></svg>
<div class="t" style="left:1315.77px;top:618.06px;font-size:11.67px;line-height:14px;color:#454646;font-weight:400;">Threshold</div>
<div class="b" style="left:1372.5px;top:628px;width:199.5px;height:1px;background:#8a8a8a"></div>

</body></html>
